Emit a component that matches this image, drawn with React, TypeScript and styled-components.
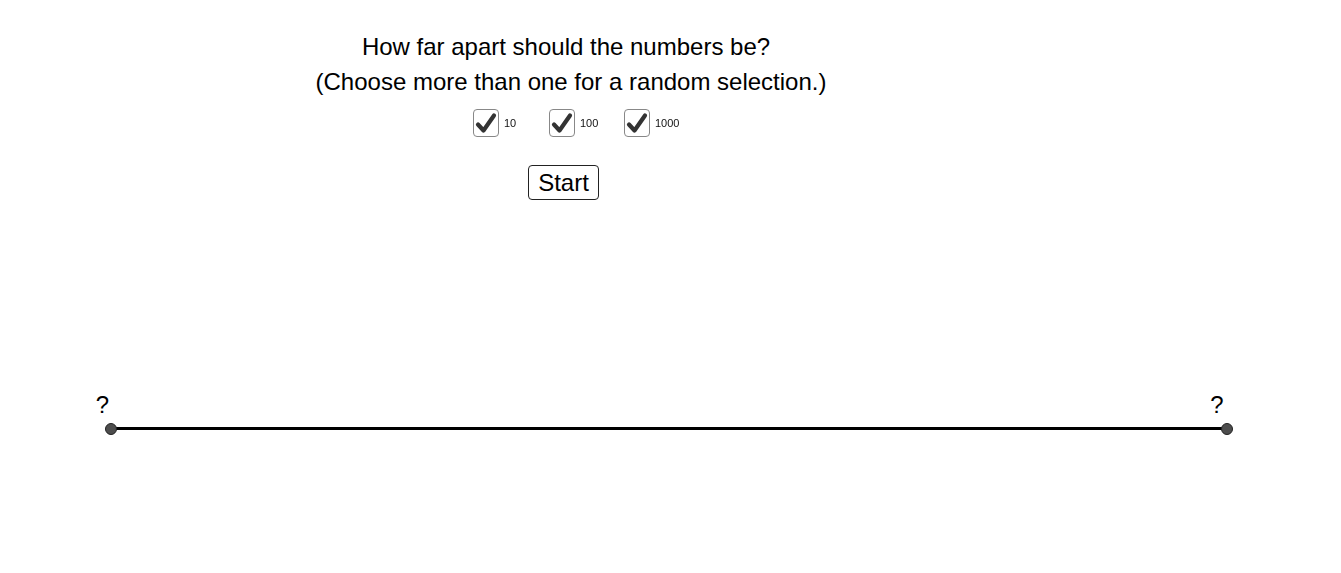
import * as React from 'react';
import styled, { createGlobalStyle } from 'styled-components';

const GlobalStyle = createGlobalStyle`
  html, body {
    margin: 0;
    padding: 0;
    background: #fff;
  }
  body {
    font-family: 'Liberation Sans', Arial, sans-serif;
    color: #000;
    -webkit-font-smoothing: antialiased;
  }
`;

const Page = styled.div`
  width: 1341px;
  height: 573px;
  overflow: hidden;
  display: flex;
  flex-direction: column;
`;

const Prompt = styled.div`
  width: 600px;
  margin-left: 266px;
  padding-top: 29px;
  text-align: center;
  font-size: 24px;
  line-height: 35px;
`;

const PromptLine = styled.div<{ $shift?: number }>`
  padding-left: ${(p) => (p.$shift ?? 0) * 2}px;
`;

const OptionRow = styled.div`
  display: flex;
  margin-top: 10px;
  padding-left: 473px;
  height: 28px;
`;

const Option = styled.label`
  display: flex;
  align-items: center;
  width: 75.5px;
  gap: 5px;
  font-size: 11px;
  color: #111;
  cursor: pointer;
`;

const OptionText = styled.span`
  will-change: transform;
`;

const Box = styled.span<{ $checked: boolean }>`
  box-sizing: border-box;
  width: 26px;
  height: 28px;
  border: 1.5px solid #888;
  border-radius: 4px;
  background: #fff;
  display: flex;
  align-items: center;
  justify-content: center;
  svg {
    visibility: ${(p) => (p.$checked ? 'visible' : 'hidden')};
  }
`;

const ButtonRow = styled.div`
  display: flex;
  padding-left: 528px;
  margin-top: 28px;
`;

const StartButton = styled.button`
  box-sizing: border-box;
  width: 71px;
  height: 35px;
  padding: 0;
  border: 1px solid #222;
  border-radius: 4px;
  background: #fff;
  font-family: 'Liberation Sans', Arial, sans-serif;
  font-size: 24px;
  color: #000;
  cursor: pointer;
`;

const NumberLine = styled.div`
  margin-top: 192px;
  margin-left: 111px;
  width: 1116px;
  display: flex;
  flex-direction: column;
`;

const Labels = styled.div`
  display: flex;
  justify-content: space-between;
  font-size: 24px;
  line-height: 26px;
  margin: 0 -1px 0 -19.5px;
`;

const Mark = styled.span`
  width: 22px;
  text-align: center;
`;

const Track = styled.div`
  position: relative;
  margin-top: 9px;
  height: 3px;
  background: #000;
`;

const Dot = styled.span<{ $side: 'left' | 'right' }>`
  position: absolute;
  top: -4.5px;
  ${(p) => (p.$side === 'left' ? 'left: -6px;' : 'right: -6px;')}
  box-sizing: border-box;
  width: 12px;
  height: 12px;
  border-radius: 50%;
  background: #4d4d4d;
  border: 1px solid #222;
`;

const options = [10, 100, 1000];

export default function App() {
  const [checked, setChecked] = React.useState<Record<number, boolean>>({
    10: true,
    100: true,
    1000: true,
  });

  return (
    <Page>
      <GlobalStyle />
      <Prompt>
        <PromptLine>How far apart should the numbers be?</PromptLine>
        <PromptLine $shift={5}>
          (Choose more than one for a random selection.)
        </PromptLine>
      </Prompt>
      <OptionRow>
        {options.map((n) => (
          <Option
            key={n}
            onClick={() => setChecked((c) => ({ ...c, [n]: !c[n] }))}
          >
            <Box $checked={checked[n]}>
              <svg width="24" height="26" viewBox="0 0 24 26">
                <path
                  d="M4 14.5 L9.5 20.5 L20 5.5"
                  fill="none"
                  stroke="#333"
                  strokeWidth="4.2"
                  strokeLinecap="round"
                  strokeLinejoin="round"
                />
              </svg>
            </Box>
            <OptionText>{n}</OptionText>
          </Option>
        ))}
      </OptionRow>
      <ButtonRow>
        <StartButton>Start</StartButton>
      </ButtonRow>
      <NumberLine>
        <Labels>
          <Mark>?</Mark>
          <Mark>?</Mark>
        </Labels>
        <Track>
          <Dot $side="left" />
          <Dot $side="right" />
        </Track>
      </NumberLine>
    </Page>
  );
}
